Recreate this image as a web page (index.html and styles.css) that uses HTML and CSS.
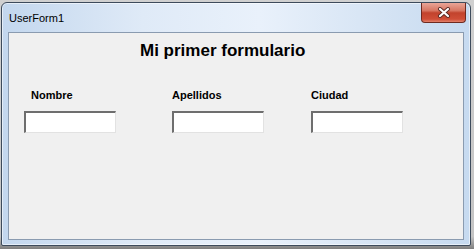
FILE: index.html
```html
<!DOCTYPE html>
<html lang="es">
<head>
    <meta charset="UTF-8">
    <title>UserForm1</title>
    <link rel="stylesheet" href="styles.css">
</head>
<body>
    <div class="window">
        <div class="titlebar">
            <span class="caption">UserForm1</span>
            <div class="close">
                <svg width="14" height="11" viewBox="0 0 14 11">
                    <path d="M3 2 L11 9 M11 2 L3 9" stroke="#5a2a24" stroke-width="4" stroke-linecap="round"/>
                    <path d="M3 2 L11 9 M11 2 L3 9" stroke="#ffffff" stroke-width="2.2" stroke-linecap="round"/>
                </svg>
            </div>
        </div>
        <div class="client">
            <h1 class="heading">Mi primer formulario</h1>
            <div class="fields">
                <div class="field">
                    <label class="label first">Nombre</label>
                    <input type="text" class="textbox">
                </div>
                <div class="field">
                    <label class="label">Apellidos</label>
                    <input type="text" class="textbox">
                </div>
                <div class="field">
                    <label class="label">Ciudad</label>
                    <input type="text" class="textbox">
                </div>
            </div>
        </div>
    </div>
</body>
</html>
```

FILE: styles.css
```css
body {
    margin: 0;
    width: 474px;
    height: 249px;
    background: linear-gradient(#d0d0d0, #c4c4c4 95%, #7e7e7e);
    font-family: "Liberation Sans", Arial, sans-serif;
    overflow: hidden;
}
.window {
    box-sizing: border-box;
    margin: 2px 0 0 1px;
    width: 470px;
    height: 244px;
    border: 1px solid #3d4b5c;
    border-radius: 6px 6px 2px 2px;
    background: linear-gradient(to right, #c3d7ee, #dfeaf7 30%, #e9f1fb 55%, #d6e4f4 80%, #c6daf0);
    box-shadow: inset 0 0 0 1px rgba(255,255,255,0.55);
    display: flex;
    flex-direction: column;
}
.titlebar {
    height: 29px;
    display: flex;
    align-items: flex-start;
}
.caption {
    margin: 9px 0 0 7px;
    font-size: 11px;
    line-height: 13px;
    color: #000;
}
.close {
    box-sizing: border-box;
    margin-left: auto;
    margin-right: 4px;
    width: 45px;
    height: 20px;
    border: 1px solid #6e2a20;
    border-top: none;
    border-radius: 0 0 4px 4px;
    background: linear-gradient(#e9a597, #d77662 40%, #c2432d 52%, #cf4e37 85%, #e2826c);
    display: flex;
    align-items: center;
    justify-content: center;
}
.client {
    box-sizing: border-box;
    margin: 0 6px 5px 6px;
    height: 208px;
    border: 1px solid #8a9bb0;
    background: #f0f0f0;
    padding: 8px 0 0 15px;
}
.heading {
    margin: 0 0 28px 116px;
    font-size: 17px;
    line-height: 20px;
    font-weight: bold;
    color: #000;
}
.fields {
    display: grid;
    grid-template-columns: 148px 139px 92px;
}
.field {
    display: flex;
    flex-direction: column;
    align-items: flex-start;
}
.label {
    font-size: 11px;
    line-height: 13px;
    font-weight: bold;
    color: #000;
    margin-bottom: 9px;
}
.label.first {
    margin-left: 7px;
}
.textbox {
    box-sizing: border-box;
    width: 92px;
    height: 22px;
    margin: 0;
    padding: 0;
    background: #fff;
    border-top: 2px solid #6e6e6e;
    border-left: 2px solid #6e6e6e;
    border-right: 1px solid #e2e2e2;
    border-bottom: 1px solid #e2e2e2;
    outline: none;
}
```
